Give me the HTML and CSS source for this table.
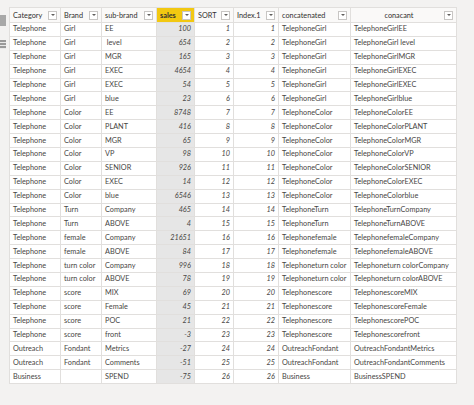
FILE: index.html
```html
<!DOCTYPE html>
<html>
<head>
<meta charset="utf-8">
<link rel="stylesheet" href="styles.css">
</head>
<body>
<div class="page">
  <div class="rail">
    <div class="rail-icon"></div>
    <div class="rail-icon grid"></div>
  </div>
  <div class="main">
    <table class="grid-table">
      <colgroup>
        <col class="c1"><col class="c2"><col class="c3"><col class="c4"><col class="c5"><col class="c6"><col class="c7"><col class="c8">
      </colgroup>
      <thead>
        <tr>
          <th><div class="h"><span>Category</span><i class="dd"></i></div></th>
          <th><div class="h"><span>Brand</span><i class="dd"></i></div></th>
          <th><div class="h"><span>sub-brand</span><i class="dd"></i></div></th>
          <th class="sel"><div class="h"><span>sales</span><i class="dd"></i></div></th>
          <th><div class="h"><span>SORT</span><i class="dd"></i></div></th>
          <th><div class="h"><span>Index.1</span><i class="dd"></i></div></th>
          <th><div class="h"><span>concatenated</span><i class="dd"></i></div></th>
          <th><div class="h center"><span>conacant</span><i class="dd"></i></div></th>
        </tr>
      </thead>
      <tbody>
        <tr><td>Telephone</td><td>Girl</td><td>EE</td><td class="num s">100</td><td class="num">1</td><td class="num">1</td><td>TelephoneGirl</td><td>TelephoneGirlEE</td></tr>
        <tr><td>Telephone</td><td>Girl</td><td>&nbsp;level</td><td class="num s">654</td><td class="num">2</td><td class="num">2</td><td>TelephoneGirl</td><td>TelephoneGirl level</td></tr>
        <tr><td>Telephone</td><td>Girl</td><td>MGR</td><td class="num s">165</td><td class="num">3</td><td class="num">3</td><td>TelephoneGirl</td><td>TelephoneGirlMGR</td></tr>
        <tr><td>Telephone</td><td>Girl</td><td>EXEC</td><td class="num s">4654</td><td class="num">4</td><td class="num">4</td><td>TelephoneGirl</td><td>TelephoneGirlEXEC</td></tr>
        <tr><td>Telephone</td><td>Girl</td><td>EXEC</td><td class="num s">54</td><td class="num">5</td><td class="num">5</td><td>TelephoneGirl</td><td>TelephoneGirlEXEC</td></tr>
        <tr><td>Telephone</td><td>Girl</td><td>blue</td><td class="num s">23</td><td class="num">6</td><td class="num">6</td><td>TelephoneGirl</td><td>TelephoneGirlblue</td></tr>
        <tr><td>Telephone</td><td>Color</td><td>EE</td><td class="num s">8748</td><td class="num">7</td><td class="num">7</td><td>TelephoneColor</td><td>TelephoneColorEE</td></tr>
        <tr><td>Telephone</td><td>Color</td><td>PLANT</td><td class="num s">416</td><td class="num">8</td><td class="num">8</td><td>TelephoneColor</td><td>TelephoneColorPLANT</td></tr>
        <tr><td>Telephone</td><td>Color</td><td>MGR</td><td class="num s">65</td><td class="num">9</td><td class="num">9</td><td>TelephoneColor</td><td>TelephoneColorMGR</td></tr>
        <tr><td>Telephone</td><td>Color</td><td>VP</td><td class="num s">98</td><td class="num">10</td><td class="num">10</td><td>TelephoneColor</td><td>TelephoneColorVP</td></tr>
        <tr><td>Telephone</td><td>Color</td><td>SENIOR</td><td class="num s">926</td><td class="num">11</td><td class="num">11</td><td>TelephoneColor</td><td>TelephoneColorSENIOR</td></tr>
        <tr><td>Telephone</td><td>Color</td><td>EXEC</td><td class="num s">14</td><td class="num">12</td><td class="num">12</td><td>TelephoneColor</td><td>TelephoneColorEXEC</td></tr>
        <tr><td>Telephone</td><td>Color</td><td>blue</td><td class="num s">6546</td><td class="num">13</td><td class="num">13</td><td>TelephoneColor</td><td>TelephoneColorblue</td></tr>
        <tr><td>Telephone</td><td>Turn</td><td>Company</td><td class="num s">465</td><td class="num">14</td><td class="num">14</td><td>TelephoneTurn</td><td>TelephoneTurnCompany</td></tr>
        <tr><td>Telephone</td><td>Turn</td><td>ABOVE</td><td class="num s">4</td><td class="num">15</td><td class="num">15</td><td>TelephoneTurn</td><td>TelephoneTurnABOVE</td></tr>
        <tr><td>Telephone</td><td>female</td><td>Company</td><td class="num s">21651</td><td class="num">16</td><td class="num">16</td><td>Telephonefemale</td><td>TelephonefemaleCompany</td></tr>
        <tr><td>Telephone</td><td>female</td><td>ABOVE</td><td class="num s">84</td><td class="num">17</td><td class="num">17</td><td>Telephonefemale</td><td>TelephonefemaleABOVE</td></tr>
        <tr><td>Telephone</td><td>turn color</td><td>Company</td><td class="num s">996</td><td class="num">18</td><td class="num">18</td><td>Telephoneturn color</td><td>Telephoneturn colorCompany</td></tr>
        <tr><td>Telephone</td><td>turn color</td><td>ABOVE</td><td class="num s">78</td><td class="num">19</td><td class="num">19</td><td>Telephoneturn color</td><td>Telephoneturn colorABOVE</td></tr>
        <tr><td>Telephone</td><td>score</td><td>MIX</td><td class="num s">69</td><td class="num">20</td><td class="num">20</td><td>Telephonescore</td><td>TelephonescoreMIX</td></tr>
        <tr><td>Telephone</td><td>score</td><td>Female</td><td class="num s">45</td><td class="num">21</td><td class="num">21</td><td>Telephonescore</td><td>TelephonescoreFemale</td></tr>
        <tr><td>Telephone</td><td>score</td><td>POC</td><td class="num s">21</td><td class="num">22</td><td class="num">22</td><td>Telephonescore</td><td>TelephonescorePOC</td></tr>
        <tr><td>Telephone</td><td>score</td><td>front</td><td class="num s">-3</td><td class="num">23</td><td class="num">23</td><td>Telephonescore</td><td>Telephonescorefront</td></tr>
        <tr><td>Outreach</td><td>Fondant</td><td>Metrics</td><td class="num s">-27</td><td class="num">24</td><td class="num">24</td><td>OutreachFondant</td><td>OutreachFondantMetrics</td></tr>
        <tr><td>Outreach</td><td>Fondant</td><td>Comments</td><td class="num s">-51</td><td class="num">25</td><td class="num">25</td><td>OutreachFondant</td><td>OutreachFondantComments</td></tr>
        <tr><td>Business</td><td></td><td>SPEND</td><td class="num s">-75</td><td class="num">26</td><td class="num">26</td><td>Business</td><td>BusinessSPEND</td></tr>
      </tbody>
    </table>
  </div>
</div>
</body>
</html>
```

FILE: styles.css
```css
html, body {
  margin: 0;
  padding: 0;
  background: #f3f2f1;
}
body {
  font-family: Lato, "Liberation Sans", sans-serif;
  font-size: 7.3px;
  color: #484644;
  width: 474px;
  height: 405px;
  overflow: hidden;
}
.page {
  display: flex;
  height: 405px;
}
.rail {
  width: 9px;
  display: flex;
  flex-direction: column;
  gap: 14px;
  padding-top: 15px;
}
.rail-icon {
  width: 6px;
  height: 11px;
  background: #a8a8a8;
}
.rail-icon.grid {
  height: 9px;
  background: repeating-linear-gradient(#9a9a9a 0 2px, #e8e8e8 2px 3px);
}
.main {
  padding-top: 7px;
}
.grid-table {
  border-collapse: collapse;
  table-layout: fixed;
  width: 447px;
  background: #fff;
}
.c1 { width: 51px; }
.c2 { width: 41px; }
.c3 { width: 55px; }
.c4 { width: 38px; }
.c5 { width: 39px; }
.c6 { width: 45px; }
.c7 { width: 72px; }
.c8 { width: 106px; }
th {
  height: 14px;
  padding: 0;
  font-weight: 400;
  text-align: left;
  border: 1px solid #e1dfdd;
  background: #faf9f8;
  color: #323130;
  white-space: nowrap;
}
th.sel {
  background: #f2c811;
  font-weight: 700;
}
.h {
  display: flex;
  align-items: center;
  justify-content: space-between;
  padding: 0 3px 0 3px;
}
.h.center span {
  flex: 1;
  text-align: center;
}
.dd {
  width: 7px;
  height: 7px;
  border: 1px solid #c8c6c4;
  background: #fff;
  display: flex;
  align-items: center;
  justify-content: center;
  flex: none;
}
.dd::after {
  content: "";
  border-left: 2px solid transparent;
  border-right: 2px solid transparent;
  border-top: 2px solid #605e5c;
}
td {
  height: 12.9px;
  padding: 0 3px;
  border: 1px solid #e1dfdd;
  white-space: nowrap;
  overflow: hidden;
  line-height: 12px;
}
td.num {
  text-align: right;
  font-style: italic;
}
td.s {
  background: #e6e6e6;
}
```
